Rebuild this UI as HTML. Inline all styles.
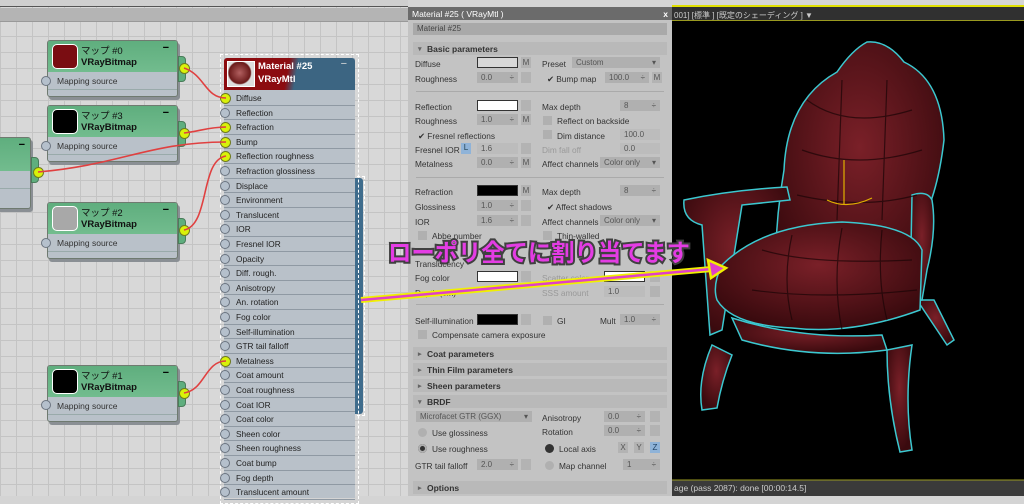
<!DOCTYPE html>
<html><head><meta charset="utf-8"><style>
*{margin:0;padding:0;box-sizing:border-box}
body{width:1024px;height:496px;overflow:hidden;position:relative;background:#d4d4d4;font-family:"Liberation Sans","Noto Sans CJK JP",sans-serif}
.a{position:absolute}
#ne{left:0;top:0;width:408px;height:496px;background-color:#d8d8d8;background-image:linear-gradient(#c4c4c4 1px,transparent 1px),linear-gradient(90deg,#c4c4c4 1px,transparent 1px);background-size:16px 16px;background-position:0 4px}
.node{position:absolute;width:131px;border:1px solid #6f7a70;border-radius:3px;background:#b9c1c9;box-shadow:2px 3px 0 #8a8f94}
.nh{height:31px;background:linear-gradient(#5fae7e,#72bc8e);position:relative;border-radius:2px 2px 0 0}
.sw{position:absolute;left:4px;top:3px;width:26px;height:25px;border-radius:5px;border:1px solid #fff}
.nt{position:absolute;left:33px;font-size:9.5px;color:#111}
.nm{position:absolute;right:8px;top:1px;font-size:11px;font-weight:bold}
.nb{height:18px;font-size:8.5px;color:#333;padding:4px 0 0 9px;position:relative;border-bottom:1px solid #9aa}
.sock{position:absolute;width:10px;height:10px;border-radius:50%;background:#b5c0cc;border:1px solid #6b7480}
.ys{position:absolute;width:11px;height:11px;border-radius:50%;background:#d9f20a;border:1px solid #707a20}
.tab{position:absolute;width:8px;height:26px;background:#5fae7e;border-radius:0 4px 4px 0;border:1px solid #4a7c5a}
.mrow{position:absolute;left:0;width:131px;height:14.6px;border-bottom:1px solid #8f99a3;font-size:8.3px;color:#222;padding:2px 0 0 12px}
#mp{left:408px;top:0;width:264px;height:496px;background:#c3c3c3}
.t{position:absolute;font-size:8.3px;color:#333;white-space:nowrap}
.g{color:#999}
.f{position:absolute;height:11px;background:#b0b0b0;font-size:8px;color:#555;padding:1px 4px;white-space:nowrap}
.sb{position:absolute;width:10px;height:11px;background:#b3b3b3;font-size:8px;color:#555;text-align:center;line-height:11px}
.cb{position:absolute;width:9px;height:9px;background:#b0b0b0}
.hd{position:absolute;left:5px;width:254px;height:13px;background:#b9b9b9;font-size:8.5px;font-weight:bold;color:#333;padding:2px 0 0 14px}
.hd:before{content:"▸";position:absolute;left:5px;font-size:7px;top:3px;color:#666}
.hd.o:before{content:"▾"}
.sep{position:absolute;left:8px;width:248px;height:1px;background:#aaa}
</style></head><body>
<div id="ne" class="a">
 <div class="a" style="left:0;top:0;width:408px;height:7px;background:#cfcfcf;border-bottom:1px solid #555"></div>
 <div class="a" style="left:0;top:8px;width:408px;height:14px;background:#b4b4b4;border-bottom:1px solid #999"></div>
 <div class="node" style="left:-4px;top:137px;width:35px;height:72px"><div class="nh" style="height:33px"><span class="nm" style="right:5px">−</span></div><div style="height:18px;border-bottom:1px solid #9aa"></div></div>
 <div class="tab" style="left:31px;top:157px"></div><div class="ys" style="left:33px;top:167px"></div>
 <div class="node" style="left:47px;top:40px"><div class="nh"><div class="sw" style="background:#7a0d12"></div><div class="nt" style="top:2px">マップ #0</div><div class="nt" style="top:16px;font-weight:bold">VRayBitmap</div><span class="nm">−</span></div><div class="nb">Mapping source</div><div style="height:6px"></div></div>
 <div class="tab" style="left:178px;top:56px"></div><div class="ys" style="left:179px;top:63px"></div><div class="sock" style="left:41px;top:76px"></div>
 <div class="node" style="left:47px;top:105px"><div class="nh"><div class="sw" style="background:#000"></div><div class="nt" style="top:2px">マップ #3</div><div class="nt" style="top:16px;font-weight:bold">VRayBitmap</div><span class="nm">−</span></div><div class="nb">Mapping source</div><div style="height:6px"></div></div>
 <div class="tab" style="left:178px;top:121px"></div><div class="ys" style="left:179px;top:128px"></div><div class="sock" style="left:41px;top:141px"></div>
 <div class="node" style="left:47px;top:202px"><div class="nh"><div class="sw" style="background:#a8a8a8"></div><div class="nt" style="top:2px">マップ #2</div><div class="nt" style="top:16px;font-weight:bold">VRayBitmap</div><span class="nm">−</span></div><div class="nb">Mapping source</div><div style="height:6px"></div></div>
 <div class="tab" style="left:178px;top:218px"></div><div class="ys" style="left:179px;top:225px"></div><div class="sock" style="left:41px;top:238px"></div>
 <div class="node" style="left:47px;top:365px"><div class="nh"><div class="sw" style="background:#000"></div><div class="nt" style="top:2px">マップ #1</div><div class="nt" style="top:16px;font-weight:bold">VRayBitmap</div><span class="nm">−</span></div><div class="nb">Mapping source</div><div style="height:6px"></div></div>
 <div class="tab" style="left:178px;top:381px"></div><div class="ys" style="left:179px;top:388px"></div><div class="sock" style="left:41px;top:400px"></div>
 <div class="a" style="left:352px;top:176px;width:13px;height:240px;border:1px dashed #fff;border-left:none"></div>
 <div class="a" style="left:355px;top:178px;width:8px;height:236px;background:#3f6c8c;border-radius:0 3px 3px 0"></div>
 <div class="a" style="left:220px;top:54px;width:139px;height:450px;border:1.5px dashed #fff"></div>
 <div class="a" style="left:224px;top:58px;width:131px;height:440px;background:#b9c1c9">
  <div style="height:32px;background:linear-gradient(100deg,#8c0c10 0 48%,#3c6582 55%);border-radius:3px 3px 0 0;position:relative">
   <div class="a" style="left:3px;top:3px;width:28px;height:26px;background:radial-gradient(circle at 45% 45%,#b26060,#6a1a1a 55%,#ddd 62%);border:1px solid #fff"></div>
   <div class="a" style="left:34px;top:3px;font-size:9.5px;font-weight:bold;color:#fff">Material #25</div>
   <div class="a" style="left:34px;top:16px;font-size:9.5px;font-weight:bold;color:#fff">VRayMtl</div>
   <div class="a" style="right:8px;top:0;font-size:11px;color:#ddd">−</div>
  </div>
 </div>
 <div id="rows"></div>
 <svg class="a" style="left:0;top:0" width="408" height="496">
  <g fill="none" stroke="#e04040" stroke-width="1.6">
   <path d="M184 68 C205 75 205 98 226 98"/>
   <path d="M184 133 C200 131 210 127 226 127"/>
   <path d="M38 172 C120 165 150 142 226 142"/>
   <path d="M184 230 C210 225 200 160 226 156"/>
   <path d="M184 393 C205 390 205 361 226 361"/>
  </g>
 </svg>
</div>
<div id="mp" class="a">
 <div class="a" style="left:0;top:0;width:264px;height:7px;background:#d5d5d5"></div>
 <div class="a" style="left:0;top:7px;width:264px;height:13px;background:#6b6b6b;color:#fff;font-size:8.5px;padding:2px 4px">Material #25 ( VRayMtl )<span style="position:absolute;right:4px;font-weight:bold">x</span></div>
 <div class="f" style="left:5px;top:23px;width:254px;height:12px;background:#a9a9a9;color:#444">Material #25</div>
 <div class="hd o" style="top:42px">Basic parameters</div>
 <div class="t" style="left:7px;top:59px">Diffuse</div><div class="a" style="left:69px;top:57px;width:41px;height:11px;background:#d8d8d8;border:1px solid #333"></div><div class="sb" style="left:113px;top:57px">M</div>
 <div class="t" style="left:134px;top:59px">Preset</div><div class="f" style="left:164px;top:57px;width:88px">Custom<span style="float:right">▾</span></div>
 <div class="t" style="left:7px;top:74px">Roughness</div><div class="f" style="left:69px;top:72px;width:41px">0.0<span style="float:right">÷</span></div><div class="sb" style="left:113px;top:72px"></div>
 <div class="t" style="left:139px;top:74px">✔ Bump map</div><div class="f" style="left:197px;top:72px;width:44px">100.0<span style="float:right">÷</span></div><div class="sb" style="left:244px;top:72px">M</div>
 <div class="sep" style="top:91px"></div>
 <div class="t" style="left:7px;top:102px">Reflection</div><div class="a" style="left:69px;top:100px;width:41px;height:11px;background:#fff;border:1px solid #333"></div><div class="sb" style="left:113px;top:100px"></div>
 <div class="t" style="left:134px;top:102px">Max depth</div><div class="f" style="left:212px;top:100px;width:40px">8<span style="float:right">÷</span></div>
 <div class="t" style="left:7px;top:116px">Roughness</div><div class="f" style="left:69px;top:114px;width:41px">1.0<span style="float:right">÷</span></div><div class="sb" style="left:113px;top:114px">M</div>
 <div class="cb" style="left:135px;top:116px"></div><div class="t" style="left:149px;top:116px">Reflect on backside</div>
 <div class="t" style="left:10px;top:131px">✔ Fresnel reflections</div>
 <div class="cb" style="left:135px;top:130px"></div><div class="t" style="left:149px;top:131px">Dim distance</div><div class="f g" style="left:212px;top:129px;width:40px;background:#bcbcbc">100.0</div>
 <div class="t" style="left:7px;top:145px">Fresnel IOR</div><div class="a" style="left:53px;top:143px;width:10px;height:11px;background:#8fb3d8;font-size:8px;color:#245;text-align:center">L</div><div class="f g" style="left:69px;top:143px;width:41px;background:#bcbcbc">1.6</div><div class="sb" style="left:113px;top:143px"></div>
 <div class="t g" style="left:134px;top:145px">Dim fall off</div><div class="f g" style="left:212px;top:143px;width:40px;background:#bcbcbc">0.0</div>
 <div class="t" style="left:7px;top:159px">Metalness</div><div class="f" style="left:69px;top:157px;width:41px">0.0<span style="float:right">÷</span></div><div class="sb" style="left:113px;top:157px">M</div>
 <div class="t" style="left:134px;top:159px">Affect channels</div><div class="f" style="left:192px;top:157px;width:60px">Color only<span style="float:right">▾</span></div>
 <div class="sep" style="top:177px"></div>
 <div class="t" style="left:7px;top:187px">Refraction</div><div class="a" style="left:69px;top:185px;width:41px;height:11px;background:#000;border:1px solid #333"></div><div class="sb" style="left:113px;top:185px">M</div>
 <div class="t" style="left:134px;top:187px">Max depth</div><div class="f" style="left:212px;top:185px;width:40px">8<span style="float:right">÷</span></div>
 <div class="t" style="left:7px;top:202px">Glossiness</div><div class="f" style="left:69px;top:200px;width:41px">1.0<span style="float:right">÷</span></div><div class="sb" style="left:113px;top:200px"></div>
 <div class="t" style="left:139px;top:202px">✔ Affect shadows</div>
 <div class="t" style="left:7px;top:217px">IOR</div><div class="f" style="left:69px;top:215px;width:41px">1.6<span style="float:right">÷</span></div><div class="sb" style="left:113px;top:215px"></div>
 <div class="t" style="left:134px;top:217px">Affect channels</div><div class="f" style="left:192px;top:215px;width:60px">Color only<span style="float:right">▾</span></div>
 <div class="cb" style="left:10px;top:231px"></div><div class="t" style="left:24px;top:231px">Abbe number</div><div class="cb" style="left:135px;top:231px"></div><div class="t" style="left:149px;top:231px">Thin-walled</div>
 <div class="t" style="left:7px;top:259px">Translucency</div>
 <div class="t" style="left:7px;top:273px">Fog color</div><div class="a" style="left:69px;top:271px;width:41px;height:11px;background:#fff;border:1px solid #333"></div><div class="sb" style="left:113px;top:271px"></div>
 <div class="t g" style="left:134px;top:273px">Scatter color</div><div class="a" style="left:196px;top:271px;width:41px;height:11px;background:#fff;border:1px solid #333"></div><div class="sb" style="left:242px;top:271px"></div>
 <div class="t" style="left:7px;top:288px">Depth (cm)</div><div class="t g" style="left:134px;top:288px">SSS amount</div><div class="f g" style="left:196px;top:286px;width:41px;background:#bcbcbc">1.0</div><div class="sb" style="left:242px;top:286px"></div>
 <div class="sep" style="top:304px"></div>
 <div class="t" style="left:7px;top:316px">Self-illumination</div><div class="a" style="left:69px;top:314px;width:41px;height:11px;background:#000;border:1px solid #333"></div><div class="sb" style="left:113px;top:314px"></div>
 <div class="cb" style="left:135px;top:316px"></div><div class="t" style="left:149px;top:316px">GI</div><div class="t" style="left:192px;top:316px">Mult</div><div class="f" style="left:212px;top:314px;width:40px">1.0<span style="float:right">÷</span></div>
 <div class="cb" style="left:10px;top:330px"></div><div class="t" style="left:24px;top:330px">Compensate camera exposure</div>
 <div class="hd" style="top:347px">Coat parameters</div>
 <div class="hd" style="top:363px">Thin Film parameters</div>
 <div class="hd" style="top:379px">Sheen parameters</div>
 <div class="hd o" style="top:395px">BRDF</div>
 <div class="f" style="left:8px;top:411px;width:116px">Microfacet GTR (GGX)<span style="float:right">▾</span></div>
 <div class="t" style="left:134px;top:413px">Anisotropy</div><div class="f" style="left:196px;top:411px;width:41px">0.0<span style="float:right">÷</span></div><div class="sb" style="left:242px;top:411px"></div>
 <div class="a" style="left:10px;top:428px;width:9px;height:9px;border-radius:50%;background:#b0b0b0"></div><div class="t" style="left:24px;top:428px">Use glossiness</div>
 <div class="t" style="left:134px;top:427px">Rotation</div><div class="f" style="left:196px;top:425px;width:41px">0.0<span style="float:right">÷</span></div><div class="sb" style="left:242px;top:425px"></div>
 <div class="a" style="left:10px;top:444px;width:9px;height:9px;border-radius:50%;background:#b0b0b0;box-shadow:inset 0 0 0 2px #b0b0b0,inset 0 0 0 5px #333"></div><div class="t" style="left:24px;top:444px">Use roughness</div>
 <div class="a" style="left:137px;top:444px;width:9px;height:9px;border-radius:50%;background:#333"></div><div class="t" style="left:151px;top:444px">Local axis</div>
 <div class="sb" style="left:210px;top:442px">X</div><div class="sb" style="left:226px;top:442px">Y</div><div class="sb" style="left:242px;top:442px;background:#8fb3d8;color:#246">Z</div>
 <div class="t" style="left:7px;top:461px">GTR tail falloff</div><div class="f" style="left:69px;top:459px;width:41px">2.0<span style="float:right">÷</span></div><div class="sb" style="left:113px;top:459px"></div>
 <div class="a" style="left:137px;top:461px;width:9px;height:9px;border-radius:50%;background:#b0b0b0"></div><div class="t" style="left:151px;top:461px">Map channel</div><div class="f" style="left:215px;top:459px;width:37px">1<span style="float:right">÷</span></div>
 <div class="hd" style="top:481px">Options</div>
</div>
<div class="a" style="left:672px;top:0;width:352px;height:496px;background:#000">
 <div class="a" style="left:0;top:0;width:352px;height:5px;background:#d5d5d5"></div>
 <div class="a" style="left:0;top:5px;width:352px;height:2px;background:#e0e000"></div>
 <div class="a" style="left:0;top:7px;width:352px;height:14px;background:#303030;border-bottom:1px solid #9a9a20;font-size:8px;color:#ccc;padding:3px 2px">001] [標準 ] [既定のシェーディング ] <b>▼</b></div>
 <svg class="a" style="left:0;top:0" width="352" height="496">
  <defs><radialGradient id="r" cx="50%" cy="40%" r="60%"><stop offset="0" stop-color="#7a2028"/><stop offset="1" stop-color="#3a0a0e"/></radialGradient></defs>
  <g fill="url(#r)" stroke="#3cc8d0" stroke-width="1.5">
   <path d="M40 345 Q25 380 30 410 L45 408 Q50 380 60 355 Z"/>
   <path d="M215 350 Q215 400 228 452 L240 450 Q232 400 240 345 Z"/>
   <path d="M245 300 L275 345 L282 340 L262 300 Z"/>
   <path d="M105 305 Q100 240 112 170 Q115 100 165 72 Q180 50 195 42 Q215 40 232 62 Q270 80 272 140 Q265 200 245 230 L230 300 L130 300 Z"/>
   <path d="M12 200 Q60 190 115 187 L118 200 L70 205 L50 330 L38 335 L30 225 Q10 220 12 200 Z"/>
   <path d="M240 195 Q255 190 260 200 Q265 230 255 270 L250 300 L238 300 Z"/>
   <path d="M50 265 Q90 225 170 222 Q240 225 250 250 L248 310 Q180 335 120 328 Q60 325 45 300 Q40 285 50 265 Z"/>
   <path d="M60 318 Q130 340 210 335 L215 350 Q140 360 70 340 Z"/>
  </g>
  <g fill="none" stroke="#1a0406" stroke-width="1.2" opacity=".7">
   <path d="M135 100 Q175 130 240 110 M130 150 Q185 170 250 150 M125 195 Q190 210 245 195 M170 80 L165 220 M215 80 L210 220"/>
   <path d="M90 250 Q140 265 240 260 M80 290 Q150 300 245 290 M120 235 Q110 280 120 320 M170 228 Q160 280 170 330 M210 230 Q205 280 215 320"/>
  </g>
  <path d="M172 160 L172 205 M155 200 Q175 210 200 198" stroke="#e0b000" fill="none" stroke-width="1.2"/>
  <rect x="0" y="480" width="352" height="16" fill="#3a3a3a"/>
  <line x1="0" y1="480" x2="352" y2="480" stroke="#9a9a20"/>
  <text x="2" y="491" font-size="8.5" fill="#ccc" font-family="Liberation Sans">age (pass 2087): done [00:00:14.5]</text>
 </svg>
</div>
<svg class="a" style="left:0;top:0" width="1024" height="496">
 <line x1="361" y1="300" x2="712" y2="269" stroke="#f0f000" stroke-width="6"/>
 <line x1="361" y1="300" x2="712" y2="269" stroke="#e040c8" stroke-width="2.5"/>
 <path d="M708 260 L726 268 L711 278 Z" fill="#e040c8" stroke="#f0f000" stroke-width="2.5"/>
 <text x="388" y="261" font-size="24" font-weight="bold" font-family="Liberation Sans,'Noto Sans CJK JP',sans-serif" fill="#e43ce4" stroke="#404040" stroke-width="4" paint-order="stroke" textLength="302" lengthAdjust="spacingAndGlyphs">ローポリ全てに割り当てます</text>
</svg>
<script>
var n=["Diffuse","Reflection","Refraction","Bump","Reflection roughness","Refraction glossiness","Displace","Environment","Translucent","IOR","Fresnel IOR","Opacity","Diff. rough.","Anisotropy","An. rotation","Fog color","Self-illumination","GTR tail falloff","Metalness","Coat amount","Coat roughness","Coat IOR","Coat color","Sheen color","Sheen roughness","Coat bump","Fog depth","Translucent amount"];
var y=[0,2,3,4,18],h="";
n.forEach(function(s,i){var t=91+i*14.6;h+='<div class="mrow" style="left:224px;top:'+t+'px">'+s+'</div><div class="'+(y.indexOf(i)>=0?'ys':'sock')+'" style="left:220px;top:'+(t+2)+'px"></div>';});
document.getElementById("rows").innerHTML=h;
</script>
</body></html>
